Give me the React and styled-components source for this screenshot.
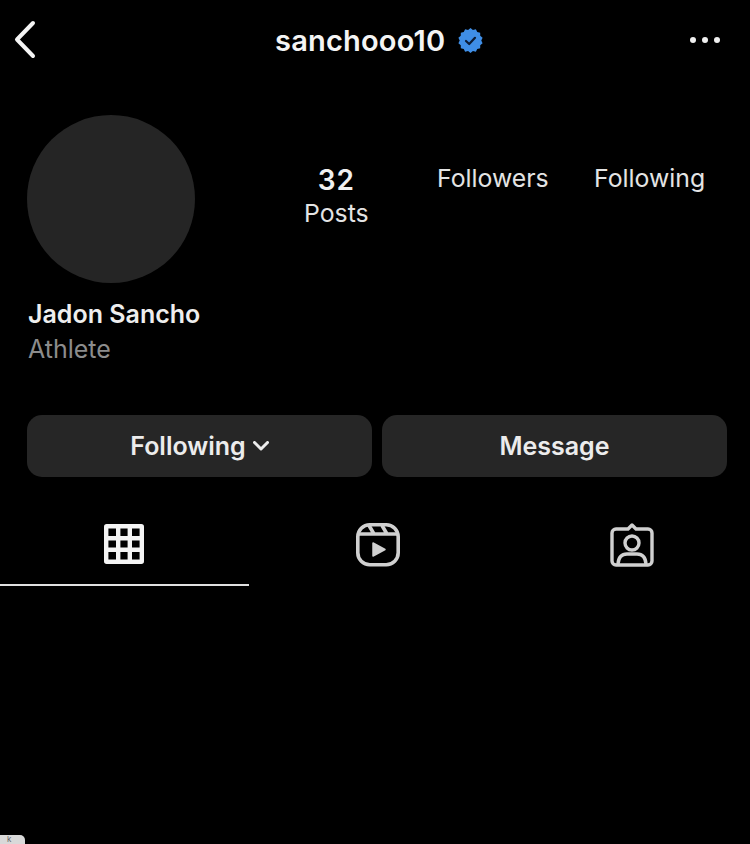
import React from 'react'
import styled, { createGlobalStyle } from 'styled-components'

const GlobalStyle = createGlobalStyle`
    html, body {
        margin: 0;
        padding: 0;
        background: #000;
        overflow: hidden;
    }
    * { box-sizing: border-box; }
`

const Page = styled.div`
    position: relative;
    width: 750px;
    height: 844px;
    background: #000;
    color: #f5f5f5;
    font-family: Inter, "Liberation Sans", sans-serif;
    overflow: hidden;
`

const Header = styled.header`
    display: flex;
    align-items: center;
    height: 80px;
    padding: 0 30px 0 13px;
`

const IconBtn = styled.div`
    display: flex;
    align-items: center;
    justify-content: center;
`

const TitleGroup = styled.div`
    display: flex;
    align-items: center;
    gap: 13px;
    margin-left: 238px;
`

const Username = styled.h1`
    margin: 0;
    font-size: 29px;
    font-weight: 600;
    letter-spacing: 0.2px;
    color: #f4f4f4;
`

const Dots = styled(IconBtn)`
    margin-left: auto;
    gap: 6px;
`

const Dot = styled.span`
    width: 6px;
    height: 6px;
    border-radius: 50%;
    background: #f0f0f0;
`

const Profile = styled.section`
    display: flex;
    padding: 35px 0 0 27px;
`

const Avatar = styled.div`
    width: 168px;
    height: 168px;
    border-radius: 50%;
    background: #252525;
    flex-shrink: 0;
`

const Stats = styled.div`
    display: grid;
    grid-template-columns: 133px 157px auto;
    align-items: start;
    margin-left: 109px;
    padding-top: 46px;
`

const Stat = styled.div`
    display: flex;
    flex-direction: column;
    align-items: center;
    justify-self: start;
    font-size: 24.8px;
    line-height: 34px;
    color: #e4e4e4;
`

const StatValue = styled.span`
    margin: 2px 0 -1px;
    font-size: 28px;
    font-weight: 600;
    letter-spacing: 1px;
    color: #f0f0f0;
`

const Bio = styled.div`
    padding: 13px 0 0 28px;
`

const Name = styled.div`
    font-size: 25px;
    line-height: 36px;
    font-weight: 600;
    color: #eeeeee;
`

const Role = styled.div`
    font-size: 25px;
    line-height: 35px;
    color: #8c8c8c;
`

const Actions = styled.div`
    display: flex;
    gap: 10px;
    padding: 48px 23px 0 27px;
`

const ActionButton = styled.div`
    flex: 1;
    height: 62px;
    display: flex;
    align-items: center;
    justify-content: center;
    gap: 7px;
    border-radius: 15px;
    background: #262626;
    font-size: 25px;
    font-weight: 600;
    color: #ececec;
`

const Tabs = styled.nav`
    display: flex;
    gap: 5px;
    margin-top: 31px;
`

const Tab = styled.div`
    flex: 0 0 249px;
    height: 78px;
    padding: 15px 2px 0 0;
    display: flex;
    justify-content: center;
    align-items: flex-start;
    border-bottom: 2px solid ${p => (p.$active ? '#e0e0e0' : 'transparent')};
`

const CornerTag = styled.div`
    position: absolute;
    left: 0;
    bottom: 0;
    width: 25px;
    height: 9px;
    border-top-right-radius: 5px;
    background: #d9d9d9;
    color: #666;
    font-size: 8px;
    line-height: 9px;
    padding-left: 7px;
`

const badgePoints = () => {
    const pts = []
    const n = 14
    for (let i = 0; i < n * 2; i++) {
        const r = i % 2 === 0 ? 12.4 : 10.8
        const a = (Math.PI * i) / n
        pts.push(`${(12.5 + r * Math.sin(a)).toFixed(2)},${(12.5 - r * Math.cos(a)).toFixed(2)}`)
    }
    return pts.join(' ')
}

const BackIcon = () => (
    <svg width="24" height="40" viewBox="0 0 24 40" fill="none">
        <path d="M20 3 L4 19.5 L20 36" stroke="#f5f5f5" strokeWidth="4" strokeLinecap="round" strokeLinejoin="round" />
    </svg>
)

const VerifiedBadge = () => (
    <svg width="25" height="25" viewBox="0 0 25 25">
        <polygon points={badgePoints()} fill="#3f8ee6" />
        <path d="M8 13 L11.2 16 L17 9.8" fill="none" stroke="#0c1b33" strokeWidth="2.2" strokeLinecap="round" strokeLinejoin="round" />
    </svg>
)

const Chevron = () => (
    <svg width="16" height="10" viewBox="0 0 16 10" fill="none">
        <path d="M1.5 1.5 L8 8 L14.5 1.5" stroke="#ececec" strokeWidth="3" strokeLinecap="round" strokeLinejoin="round" />
    </svg>
)

const GridIcon = () => (
    <svg width="40" height="42" viewBox="0 -1 40 42" fill="none" stroke="#f4f4f4" strokeWidth="4.4">
        <rect x="2.2" y="2.2" width="35.6" height="35.6" rx="0.5" />
        <path d="M14.2 2 V38 M25.8 2 V38 M2 14.2 H38 M2 25.8 H38" />
    </svg>
)

const ReelsIcon = () => (
    <svg width="44" height="44" viewBox="0 0 44 44" fill="none" stroke="#d0d0d0" strokeWidth="3.6" strokeLinejoin="round">
        <rect x="1.8" y="1.8" width="40.4" height="40" rx="12" />
        <path d="M2.5 11 H41.5 M13 2.5 L18 11 M26 2.5 L31 11" />
        <path d="M17 20 V33 L29 26.5 Z" fill="#d0d0d0" stroke="#d0d0d0" strokeWidth="1.5" />
    </svg>
)

const TaggedIcon = () => (
    <svg width="44" height="44" viewBox="0 0 44 44" fill="none" stroke="#d0d0d0" strokeWidth="3.4" strokeLinejoin="round" strokeLinecap="round">
        <path d="M6 6 H18 L22 2 L26 6 H38 A4 4 0 0 1 42 10 V38 A4 4 0 0 1 38 42 H6 A4 4 0 0 1 2 38 V10 A4 4 0 0 1 6 6 Z" />
        <circle cx="22" cy="20" r="7" />
        <path d="M8 41 C8.5 34 12 31 17 31 H27 C32 31 35.5 34 36 41" />
    </svg>
)

export default function App() {
    return (
        <Page>
            <GlobalStyle />
            <Header>
                <IconBtn><BackIcon /></IconBtn>
                <TitleGroup>
                    <Username>sanchooo10</Username>
                    <VerifiedBadge />
                </TitleGroup>
                <Dots><Dot /><Dot /><Dot /></Dots>
            </Header>
            <Profile>
                <Avatar />
                <Stats>
                    <Stat><StatValue>32</StatValue>Posts</Stat>
                    <Stat>Followers</Stat>
                    <Stat>Following</Stat>
                </Stats>
            </Profile>
            <Bio>
                <Name>Jadon Sancho</Name>
                <Role>Athlete</Role>
            </Bio>
            <Actions>
                <ActionButton>Following <Chevron /></ActionButton>
                <ActionButton>Message</ActionButton>
            </Actions>
            <Tabs>
                <Tab $active><GridIcon /></Tab>
                <Tab><ReelsIcon /></Tab>
                <Tab><TaggedIcon /></Tab>
            </Tabs>
            <CornerTag>k</CornerTag>
        </Page>
    )
}
